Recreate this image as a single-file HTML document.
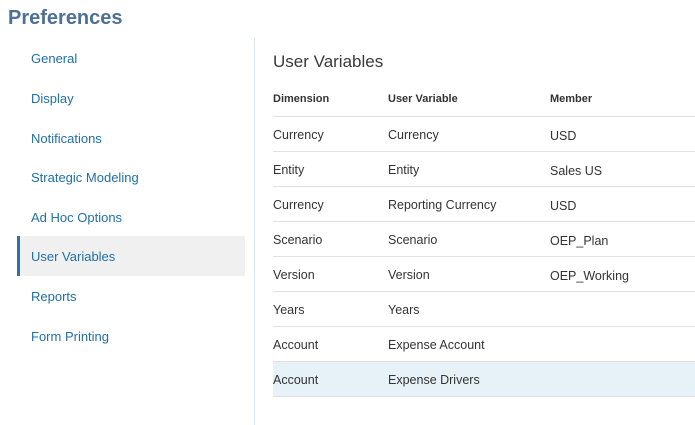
<!DOCTYPE html>
<html><head><style>
body{margin:0;width:695px;height:425px;background:#fff;font-family:"Liberation Sans",sans-serif;position:relative;overflow:hidden}
h1{position:absolute;left:8px;top:7px;margin:0;font-size:20px;font-weight:bold;color:#4d7096}
.nav a{position:absolute;left:31px;font-size:13px;color:#1f6fa8;text-decoration:none;line-height:16px}
.sel{position:absolute;left:17px;top:236px;width:228px;height:40px;background:#f0f0f0;border-left:3px solid #2b73b0;box-sizing:border-box}
.div{position:absolute;left:254px;top:38px;width:1px;height:387px;background:#dde3ea}
.t{position:absolute;left:273px;top:52px;font-size:17px;color:#3a3a3a}
.h,.c{position:absolute;font-size:12.5px;color:#333}
.h{font-weight:bold;font-size:11px;color:#333}
.ln{position:absolute;left:273px;right:0;height:1px;background:#e0e0e0}
.hl{position:absolute;left:273px;right:0;top:361px;height:35px;background:#e7f1f8}
</style></head><body>
<h1>Preferences</h1>
<div class="sel"></div>
<div class="nav">
<a style="top:51px">General</a>
<a style="top:91px">Display</a>
<a style="top:131px">Notifications</a>
<a style="top:170px">Strategic Modeling</a>
<a style="top:210px">Ad Hoc Options</a>
<a style="top:249px">User Variables</a>
<a style="top:289px">Reports</a>
<a style="top:329px">Form Printing</a>
</div>
<div class="div"></div>
<div class="t">User Variables</div>
<div class="hl"></div>
<div class="h" style="left:273px;top:93px">Dimension</div>
<div class="h" style="left:388px;top:93px">User Variable</div>
<div class="h" style="left:550px;top:93px">Member</div>
<div class="ln" style="top:116px"></div>
<div class="ln" style="top:151px"></div>
<div class="ln" style="top:186px"></div>
<div class="ln" style="top:221px"></div>
<div class="ln" style="top:256px"></div>
<div class="ln" style="top:291px"></div>
<div class="ln" style="top:326px"></div>
<div class="ln" style="top:361px"></div>
<div class="ln" style="top:396px"></div>
<div class="c" style="left:273px;top:128px">Currency</div><div class="c" style="left:388px;top:128px">Currency</div><div class="c" style="left:550px;top:129px">USD</div>
<div class="c" style="left:273px;top:163px">Entity</div><div class="c" style="left:388px;top:163px">Entity</div><div class="c" style="left:550px;top:164px">Sales US</div>
<div class="c" style="left:273px;top:198px">Currency</div><div class="c" style="left:388px;top:198px">Reporting Currency</div><div class="c" style="left:550px;top:199px">USD</div>
<div class="c" style="left:273px;top:233px">Scenario</div><div class="c" style="left:388px;top:233px">Scenario</div><div class="c" style="left:550px;top:234px">OEP_Plan</div>
<div class="c" style="left:273px;top:268px">Version</div><div class="c" style="left:388px;top:268px">Version</div><div class="c" style="left:550px;top:269px">OEP_Working</div>
<div class="c" style="left:273px;top:303px">Years</div><div class="c" style="left:388px;top:303px">Years</div>
<div class="c" style="left:273px;top:338px">Account</div><div class="c" style="left:388px;top:338px">Expense Account</div>
<div class="c" style="left:273px;top:373px">Account</div><div class="c" style="left:388px;top:373px">Expense Drivers</div>
</body></html>
